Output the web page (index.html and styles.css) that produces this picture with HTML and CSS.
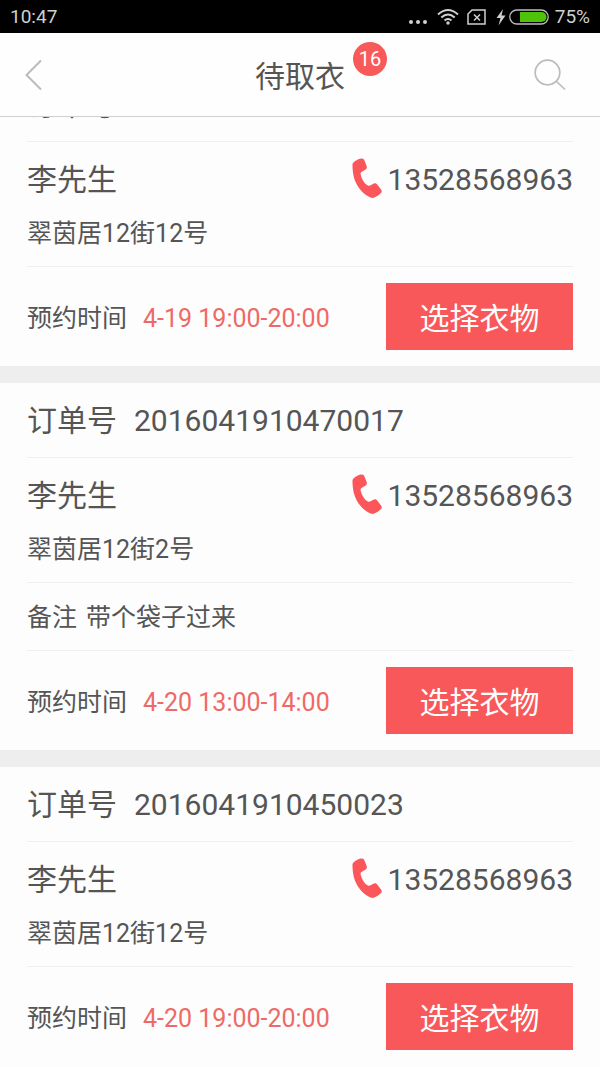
FILE: index.html
```html
<!DOCTYPE html>
<html lang="zh-CN">
<head>
<meta charset="utf-8">
<meta name="viewport" content="width=device-width, initial-scale=1">
<title>待取衣</title>
<link rel="stylesheet" href="styles.css">
</head>
<body>
<svg class="defs" aria-hidden="true">
  <symbol id="phone" viewBox="0 0 30 40">
    <path d="M0.500 6.500C0.500 4 6 1 9 0.500C11 0.300 12 1 12.500 2.500L14.800 8.500C15.200 10.500 14 11.500 12 12.500L9.500 14C8.500 14.500 8.300 15.500 8.800 17C10 21.500 12.500 25.500 15 27C16 27.800 17 27.800 18 27.500L21.500 25.800C23 25 24 25.300 25 26.300L29 31.500C30 33 30 34 29 35C27 37 24 39 21 40C19 40 17 39 14 37C7 32 2.500 24 1.200 16C0.600 12 0.500 9 0.500 6.500Z"/>
  </symbol>
</svg>
<div class="screen">
  <div class="status">
    <span>10:47</span>
    <div class="status-icons">
      <svg width="18" height="22" viewBox="0 0 18 22" fill="#d0d0d0"><circle cx="2" cy="16" r="2"/><circle cx="9" cy="16" r="2"/><circle cx="16" cy="16" r="2"/></svg>
      <svg class="wifi" width="22" height="22" viewBox="0 0 22 22" fill="none" stroke="#d0d0d0" stroke-width="2"><path d="M1 8.500Q11-0.500 21 8.500M4.300 11.500Q11 5.500 17.700 11.500M7.500 14.500Q11 11.500 14.500 14.500"/><circle cx="11" cy="17" r="1.700" fill="#d0d0d0" stroke="none"/></svg>
      <svg class="sim" width="19" height="22" viewBox="0 0 19 22" fill="none" stroke="#d0d0d0" stroke-width="1.500"><path d="M5 4H18V18H1V8ZM7 8.500L13 14.500M13 8.500L7 14.500"/></svg>
      <svg class="bolt" width="10" height="22" viewBox="0 0 10 22" fill="#d0d0d0"><path d="M7 3L0.500 12H4.500L2.500 19.500L9.500 9.500H5.500Z"/></svg>
      <svg class="battery" width="40" height="22" viewBox="0 0 40 22"><rect x="0.800" y="4" width="38.400" height="14" rx="7" fill="#000" stroke="#bdbdbd" stroke-width="1.300"/><path d="M11 6H32.500A5 5 0 0 1 32.500 16H11Z" fill="#4fc30a"/></svg>
      <span>75%</span>
    </div>
  </div>
  <header class="header">
    <button class="icon-button" type="button" aria-label="返回">
      <svg width="18" height="32" viewBox="0 0 18 32" fill="none" stroke="#bbb" stroke-width="2"><path d="M16 1.500L1.500 16L16 30.500"/></svg>
    </button>
    <h1 class="title">待取衣<span class="badge">16</span></h1>
    <button class="icon-button" type="button" aria-label="搜索">
      <svg width="32" height="32" viewBox="0 0 32 32" fill="none" stroke="#bbb" stroke-width="1.700"><circle cx="13.500" cy="13.500" r="12.300"/><path d="M22 22L31 30.500"/></svg>
    </button>
  </header>
  <main class="list">
    <article class="card card-scrolled">
      <div class="order"><span>订单号</span></div>
      <div class="customer">
        <div class="person"><span>李先生</span><a class="phone" href="tel:13528568963"><svg class="phone-icon"><use href="#phone"/></svg>13528568963</a></div>
        <div class="address">翠茵居12街12号</div>
      </div>
      <div class="booking"><div class="slot"><span>预约时间</span><time class="time">4-19 19:00-20:00</time></div><button class="choose" type="button">选择衣物</button></div>
    </article>
    <article class="card">
      <div class="order"><span>订单号</span><span>2016041910470017</span></div>
      <div class="customer">
        <div class="person"><span>李先生</span><a class="phone" href="tel:13528568963"><svg class="phone-icon"><use href="#phone"/></svg>13528568963</a></div>
        <div class="address">翠茵居12街2号</div>
      </div>
      <div class="remark"><span>备注</span><span>带个袋子过来</span></div>
      <div class="booking"><div class="slot"><span>预约时间</span><time class="time">4-20 13:00-14:00</time></div><button class="choose" type="button">选择衣物</button></div>
    </article>
    <article class="card">
      <div class="order"><span>订单号</span><span>2016041910450023</span></div>
      <div class="customer">
        <div class="person"><span>李先生</span><a class="phone" href="tel:13528568963"><svg class="phone-icon"><use href="#phone"/></svg>13528568963</a></div>
        <div class="address">翠茵居12街12号</div>
      </div>
      <div class="booking"><div class="slot"><span>预约时间</span><time class="time">4-20 19:00-20:00</time></div><button class="choose" type="button">选择衣物</button></div>
    </article>
  </main>
</div>
</body>
</html>
```
FILE: styles.css
```css
* { box-sizing: border-box; }

body {
  margin: 0;
  background: #fdfdfd;
  color: #555;
  font-family: Roboto, "Noto Sans CJK SC", sans-serif;
  font-size: 25px;
}

button {
  border: 0;
  padding: 0;
  background: none;
  font: inherit;
}

.defs { position: absolute; width: 0; height: 0; }

.screen {
  display: flex;
  flex-direction: column;
  height: 100vh;
  overflow: hidden;
}

.status {
  display: flex;
  flex: none;
  align-items: center;
  justify-content: space-between;
  height: 33px;
  padding: 0 10px;
  background: #000;
  color: #d0d0d0;
  font-size: 19px;
  line-height: 33px;
}

.status-icons { display: flex; align-items: center; }
.wifi { margin-left: 10px; }
.sim { margin-left: 8px; }
.bolt { margin-left: 10px; }
.battery { margin-left: 3px; }
.status-icons span { margin-left: 6px; }

.header {
  display: grid;
  flex: none;
  grid-template-columns: 1fr auto 1fr;
  align-items: center;
  height: 84px;
  padding: 0 25px;
  border-bottom: 1px solid #d0d0d0;
  background: #fefefe;
}

.icon-button { display: flex; justify-self: start; }
.icon-button:last-child { justify-self: end; margin-right: 9px; }

.title {
  position: relative;
  margin: 0;
  padding-top: 4px;
  font-size: 30px;
  font-weight: 400;
  line-height: 44px;
}

.badge {
  position: absolute;
  top: -9px;
  left: 100%;
  width: 34px;
  height: 34px;
  margin-left: 8px;
  border-radius: 50%;
  background: #f85a5a;
  color: #fff;
  font-size: 20px;
  line-height: 34px;
  text-align: center;
}

.list {
  display: flex;
  flex: 1;
  flex-direction: column;
  min-height: 0;
  overflow: hidden;
}

.card {
  flex: none;
  padding: 0 27px;
  background: #fdfdfd;
}

.card + .card { border-top: 17px solid #eee; }

/* The list is shown scrolled partway through its first order. */
.card-scrolled { margin-top: -50px; }

.order,
.customer,
.remark { border-bottom: 1px solid #f0f0f0; }

.order {
  display: flex;
  gap: 17px;
  padding: 16px 0 14px;
  font-size: 30px;
  line-height: 44px;
}

.customer { padding: 16px 0 14px; }

.person {
  display: flex;
  justify-content: space-between;
  font-size: 30px;
  line-height: 44px;
}

.phone {
  display: flex;
  align-items: center;
  gap: 6px;
  color: inherit;
  text-decoration: none;
}

.phone-icon {
  align-self: flex-start;
  width: 30px;
  height: 40px;
  fill: #fb5659;
}

.address {
  margin-top: 14px;
  line-height: 36px;
}

.remark {
  display: flex;
  gap: 9px;
  padding: 17px 0 14px;
  line-height: 36px;
}

.booking {
  display: flex;
  align-items: center;
  justify-content: space-between;
  padding: 16px 0;
}

.slot {
  display: flex;
  align-items: baseline;
  gap: 16px;
  padding-top: 4px;
  line-height: 36px;
}

.time { color: #ee6a66; }

.choose {
  width: 187px;
  height: 67px;
  padding-top: 4px;
  background: #f85859;
  color: #fff;
  font-size: 30px;
  line-height: 44px;
}
```
